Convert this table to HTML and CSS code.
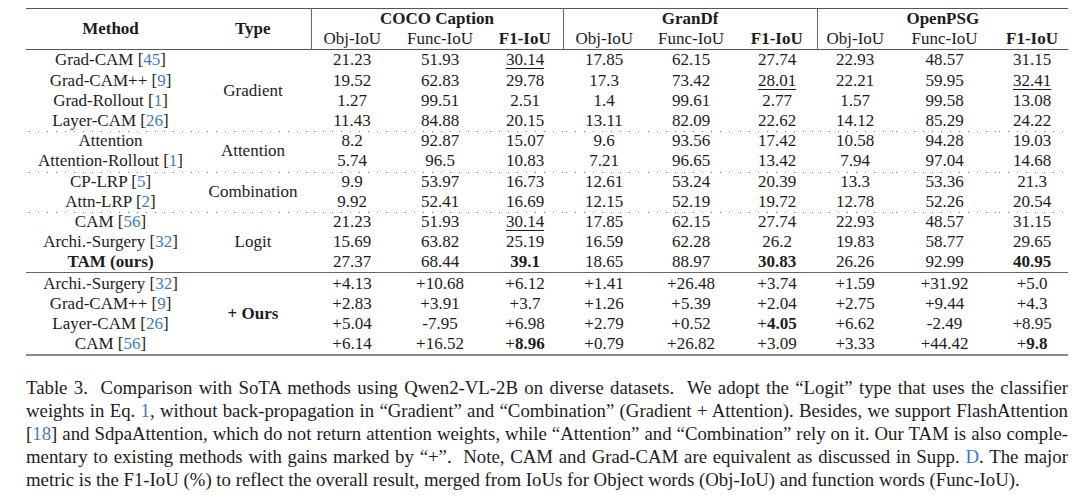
FILE: index.html
```html
<!DOCTYPE html>
<html>
<head>
<meta charset="utf-8">
<link rel="stylesheet" href="styles.css">
</head>
<body>
<div class="page">
<table class="results">
  <colgroup>
    <col class="c-method"><col class="c-type">
    <col class="c-a1"><col class="c-a2"><col class="c-a3">
    <col class="c-b1"><col class="c-b2"><col class="c-b3">
    <col class="c-c1"><col class="c-c2"><col class="c-c3">
  </colgroup>
  <thead>
    <tr class="top">
      <th rowspan="2">Method</th>
      <th rowspan="2" class="vr">Type</th>
      <th colspan="3" class="vr">COCO Caption</th>
      <th colspan="3" class="vr">GranDf</th>
      <th colspan="3">OpenPSG</th>
    </tr>
    <tr>
      <td>Obj-IoU</td><td>Func-IoU</td><td class="vr"><b>F1-IoU</b></td>
      <td>Obj-IoU</td><td>Func-IoU</td><td class="vr"><b>F1-IoU</b></td>
      <td>Obj-IoU</td><td>Func-IoU</td><td><b>F1-IoU</b></td>
    </tr>
  </thead>
  <tbody class="base">
    <tr>
      <td>Grad-CAM [<span class="cite">45</span>]</td>
      <td rowspan="4">Gradient</td>
      <td>21.23</td><td>51.93</td><td><u>30.14</u></td>
      <td>17.85</td><td>62.15</td><td>27.74</td>
      <td>22.93</td><td>48.57</td><td>31.15</td>
    </tr>
    <tr>
      <td>Grad-CAM++ [<span class="cite">9</span>]</td>
      <td>19.52</td><td>62.83</td><td>29.78</td>
      <td>17.3</td><td>73.42</td><td><u>28.01</u></td>
      <td>22.21</td><td>59.95</td><td><u>32.41</u></td>
    </tr>
    <tr>
      <td>Grad-Rollout [<span class="cite">1</span>]</td>
      <td>1.27</td><td>99.51</td><td>2.51</td>
      <td>1.4</td><td>99.61</td><td>2.77</td>
      <td>1.57</td><td>99.58</td><td>13.08</td>
    </tr>
    <tr>
      <td>Layer-CAM [<span class="cite">26</span>]</td>
      <td>11.43</td><td>84.88</td><td>20.15</td>
      <td>13.11</td><td>82.09</td><td>22.62</td>
      <td>14.12</td><td>85.29</td><td>24.22</td>
    </tr>
    <tr class="dot">
      <td>Attention</td>
      <td rowspan="2">Attention</td>
      <td>8.2</td><td>92.87</td><td>15.07</td>
      <td>9.6</td><td>93.56</td><td>17.42</td>
      <td>10.58</td><td>94.28</td><td>19.03</td>
    </tr>
    <tr>
      <td>Attention-Rollout [<span class="cite">1</span>]</td>
      <td>5.74</td><td>96.5</td><td>10.83</td>
      <td>7.21</td><td>96.65</td><td>13.42</td>
      <td>7.94</td><td>97.04</td><td>14.68</td>
    </tr>
    <tr class="dot">
      <td>CP-LRP [<span class="cite">5</span>]</td>
      <td rowspan="2">Combination</td>
      <td>9.9</td><td>53.97</td><td>16.73</td>
      <td>12.61</td><td>53.24</td><td>20.39</td>
      <td>13.3</td><td>53.36</td><td>21.3</td>
    </tr>
    <tr>
      <td>Attn-LRP [<span class="cite">2</span>]</td>
      <td>9.92</td><td>52.41</td><td>16.69</td>
      <td>12.15</td><td>52.19</td><td>19.72</td>
      <td>12.78</td><td>52.26</td><td>20.54</td>
    </tr>
    <tr class="dot">
      <td>CAM [<span class="cite">56</span>]</td>
      <td rowspan="3">Logit</td>
      <td>21.23</td><td>51.93</td><td><u>30.14</u></td>
      <td>17.85</td><td>62.15</td><td>27.74</td>
      <td>22.93</td><td>48.57</td><td>31.15</td>
    </tr>
    <tr>
      <td>Archi.-Surgery [<span class="cite">32</span>]</td>
      <td>15.69</td><td>63.82</td><td>25.19</td>
      <td>16.59</td><td>62.28</td><td>26.2</td>
      <td>19.83</td><td>58.77</td><td>29.65</td>
    </tr>
    <tr>
      <td><b>TAM (ours)</b></td>
      <td>27.37</td><td>68.44</td><td><b>39.1</b></td>
      <td>18.65</td><td>88.97</td><td><b>30.83</b></td>
      <td>26.26</td><td>92.99</td><td><b>40.95</b></td>
    </tr>
  </tbody>
  <tbody class="gains">
    <tr>
      <td>Archi.-Surgery [<span class="cite">32</span>]</td>
      <td rowspan="4"><b>+ Ours</b></td>
      <td>+4.13</td><td>+10.68</td><td>+6.12</td>
      <td>+1.41</td><td>+26.48</td><td>+3.74</td>
      <td>+1.59</td><td>+31.92</td><td>+5.0</td>
    </tr>
    <tr>
      <td>Grad-CAM++ [<span class="cite">9</span>]</td>
      <td>+2.83</td><td>+3.91</td><td>+3.7</td>
      <td>+1.26</td><td>+5.39</td><td>+2.04</td>
      <td>+2.75</td><td>+9.44</td><td>+4.3</td>
    </tr>
    <tr>
      <td>Layer-CAM [<span class="cite">26</span>]</td>
      <td>+5.04</td><td>-7.95</td><td>+6.98</td>
      <td>+2.79</td><td>+0.52</td><td>+<b>4.05</b></td>
      <td>+6.62</td><td>-2.49</td><td>+8.95</td>
    </tr>
    <tr>
      <td>CAM [<span class="cite">56</span>]</td>
      <td>+6.14</td><td>+16.52</td><td>+<b>8.96</b></td>
      <td>+0.79</td><td>+26.82</td><td>+3.09</td>
      <td>+3.33</td><td>+44.42</td><td>+<b>9.8</b></td>
    </tr>
  </tbody>
</table>

<div class="caption">
  <span class="line">Table 3.&nbsp; Comparison with SoTA methods using Qwen2-VL-2B on diverse datasets. &nbsp;We adopt the “Logit” type that uses the classifier</span>
  <span class="line">weights in Eq. <span class="cite">1</span>, without back-propagation in “Gradient” and “Combination” (Gradient + Attention). Besides, we support FlashAttention</span>
  <span class="line">[<span class="cite">18</span>] and SdpaAttention, which do not return attention weights, while “Attention” and “Combination” rely on it. Our TAM is also comple-</span>
  <span class="line">mentary to existing methods with gains marked by “+”. &nbsp;Note, CAM and Grad-CAM are equivalent as discussed in Supp. <span class="cite">D</span>. The major</span>
  <span class="line final">metric is the F1-IoU (%) to reflect the overall result, merged from IoUs for Object words (Obj-IoU) and function words (Func-IoU).</span>
</div>
</div>
</body>
</html>
```

FILE: styles.css
```css
html, body {
  margin: 0;
  padding: 0;
  background: #ffffff;
}

body {
  font-family: "Liberation Serif", "Times New Roman", serif;
  color: #1c1c1c;
}

.page {
  padding: 8px 12px 0 26px;
  width: 1042px;
}

.results {
  border-collapse: collapse;
  table-layout: fixed;
  width: 1042px;
  font-size: 17px;
}

.c-method { width: 169px; }
.c-type { width: 116px; }
.c-a1 { width: 82px; }
.c-a2 { width: 94px; }
.c-a3 { width: 76px; }
.c-b1 { width: 82px; }
.c-b2 { width: 92px; }
.c-b3 { width: 80px; }
.c-c1 { width: 76px; }
.c-c2 { width: 103px; }
.c-c3 { width: 72px; }

.results th,
.results td {
  padding: 0;
  height: 20.2px;
  line-height: 20px;
  text-align: center;
  vertical-align: middle;
  white-space: nowrap;
}

.results th {
  font-weight: bold;
}

.results thead {
  border-top: 1px solid #555555;
  border-bottom: 1px solid #555555;
}

.results .vr {
  border-right: 1px solid #666666;
}

.results tr.dot td {
  background-image: linear-gradient(to right, #7a7a7a 1px, transparent 1px);
  background-size: 9px 1px;
  background-repeat: repeat-x;
  background-position: 3px 0;
}

.results tbody.gains {
  border-top: 1px solid #666666;
  border-bottom: 2px solid #8a8a8a;
}

.results u {
  text-decoration: underline;
  text-decoration-thickness: 1px;
  text-underline-offset: 3px;
}

.cite {
  color: #3a7cc4;
}

.caption {
  margin-top: 20px;
  font-size: 18.8px;
  line-height: 23px;
  width: 1042px;
}

.caption .line {
  display: block;
  text-align: justify;
  text-align-last: justify;
  white-space: nowrap;
}

.caption .line.final {
  text-align-last: left;
}
```
